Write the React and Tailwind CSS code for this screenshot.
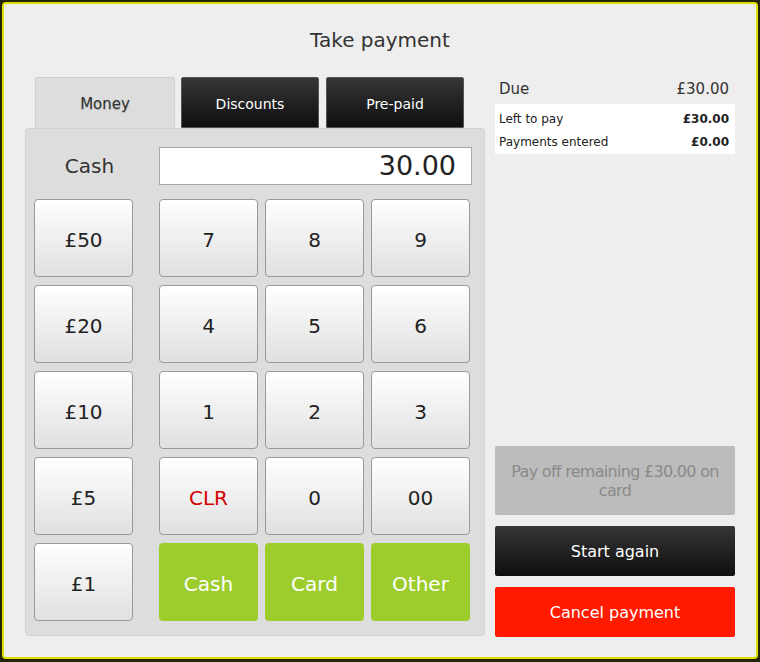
import React, { useState } from "react";

const FONT = { fontFamily: '"DejaVu Sans", Verdana, sans-serif' };

const NOTES = ["£50", "£20", "£10", "£5", "£1"];
const KEYS = ["7", "8", "9", "4", "5", "6", "1", "2", "3", "CLR", "0", "00"];
const TENDERS = ["Cash", "Card", "Other"];
const TABS = ["Money", "Discounts", "Pre-paid"];

function KeyButton({ label, onClick, className = "" }) {
  return (
    <button
      onClick={onClick}
      className={`h-[78px] w-[99px] pt-[4px] rounded-[4px] border border-[#9a9a9a] bg-gradient-to-b from-white to-[#e0e0e0] text-[20px] ${className}`}
    >
      {label}
    </button>
  );
}

export default function App() {
  const [tab, setTab] = useState("Money");
  const [amount, setAmount] = useState("30.00");

  const press = (k) => {
    if (k === "CLR") return setAmount("");
    setAmount((a) => (a + k).slice(0, 10));
  };

  return (
    <div className="w-[760px] h-[662px] bg-[#24240a] pt-[2px] px-[2px] pb-[3px]" style={FONT}>
      <div className="h-full rounded-[4px] border-2 border-[#dede00] bg-[#eeeeee] flex flex-col">
        <h1 className="mt-[22px] h-[28px] leading-[28px] text-center text-[20px] text-[#333]">
          Take payment
        </h1>

        <div className="mt-[23px] flex pl-[21px] pr-[21px]">
          {/* Left: tabs + keypad */}
          <div className="w-[460px] flex flex-col">
            <div className="flex pl-[10px] h-[51px]">
              {TABS.map((t, i) => {
                const active = tab === t;
                return (
                  <button
                    key={t}
                    onClick={() => setTab(t)}
                    className={`h-[51px] pt-[3px] rounded-t-[2px] ${
                      i === 0 ? "w-[140px]" : "w-[138px]"
                    } ${i === 1 ? "ml-[6px]" : ""} ${i === 2 ? "ml-[7px]" : ""} ${
                      active
                        ? "text-[15px] bg-[#dddddd] border border-b-0 border-[#cfcfcf] text-[#333] [text-shadow:0_1px_1px_rgba(0,0,0,0.25)]"
                        : "text-[14px] bg-gradient-to-b from-[#363636] to-[#0f0f0f] text-white border border-[#555]"
                    }`}
                  >
                    {t}
                  </button>
                );
              })}
            </div>

            <div className="h-[508px] rounded-[4px] border border-[#d2d2d2] bg-[#dddddd] pt-[18px] pl-[8px]">
              <div className="flex items-center">
                <div className="w-[111px] text-center text-[20px] text-[#333]">Cash</div>
                <div className="ml-[14px] h-[38px] w-[313px] border border-[#a8a8a8] bg-white pr-[15px] flex items-center justify-end text-[27px] text-[#222]">
                  {amount}
                </div>
              </div>

              <div className="mt-[14px] flex">
                <div className="flex flex-col gap-[8px]">
                  {NOTES.map((n) => (
                    <KeyButton key={n} label={n} className="text-[#222]" />
                  ))}
                </div>
                <div className="ml-[26px] grid grid-cols-[repeat(3,99px)] gap-x-[7px] gap-y-[8px] content-start">
                  {KEYS.map((k) => (
                    <KeyButton
                      key={k}
                      label={k}
                      onClick={() => press(k)}
                      className={k === "CLR" ? "text-[#d40000]" : "text-[#222]"}
                    />
                  ))}
                  {TENDERS.map((t) => (
                    <button
                      key={t}
                      className="h-[78px] w-[99px] pt-[4px] rounded-[4px] bg-[#9dcd2d] text-[20px] text-white"
                    >
                      {t}
                    </button>
                  ))}
                </div>
              </div>
            </div>
          </div>

          {/* Right: summary + actions */}
          <div className="ml-[10px] w-[240px] flex flex-col mb-[-1px]">
            <div className="h-[22px] mt-[1px] pl-[4px] pr-[6px] flex items-center justify-between text-[15px] text-[#333]">
              <span>Due</span>
              <span>£30.00</span>
            </div>
            <div className="mt-[4px] bg-white pt-[3px] pb-[1px] pl-[4px] pr-[6px] text-[12px] text-[#222]">
              <div className="h-[23px] flex items-center justify-between">
                <span>Left to pay</span>
                <span className="font-bold">£30.00</span>
              </div>
              <div className="h-[23px] flex items-center justify-between">
                <span>Payments entered</span>
                <span className="font-bold">£0.00</span>
              </div>
            </div>

            <div className="mt-auto flex flex-col gap-[11px]">
              <button className="h-[69px] rounded-[2px] bg-[#bcbcbc] px-[4px] text-[16px] leading-[19px] tracking-[-0.7px] text-[#8a8a8a]">
                Pay off remaining £30.00 on card
              </button>
              <button className="h-[50px] pt-[2px] rounded-[2px] bg-gradient-to-b from-[#363636] to-[#0f0f0f] text-[16px] text-white">
                Start again
              </button>
              <button className="h-[50px] pt-[2px] rounded-[2px] bg-[#ff1a00] text-[16px] text-white">
                Cancel payment
              </button>
            </div>
          </div>
        </div>
      </div>
    </div>
  );
}
